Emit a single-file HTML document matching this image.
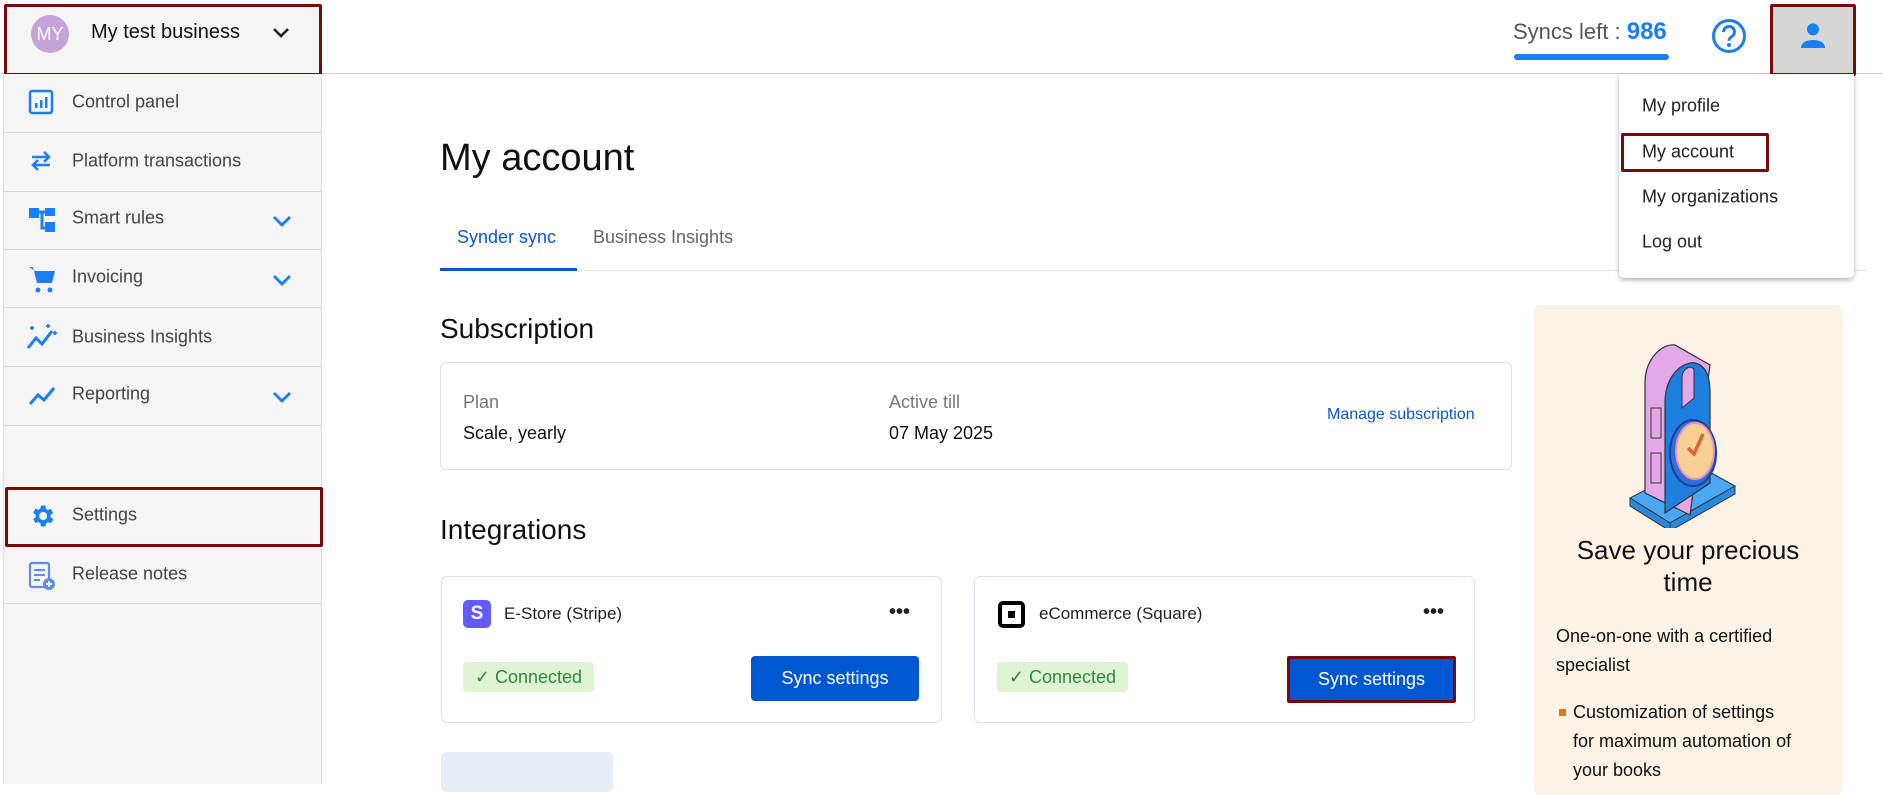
<!DOCTYPE html>
<html><head><meta charset="utf-8"><style>
*{box-sizing:border-box;margin:0;padding:0}
body{width:1883px;height:784px;overflow:hidden;background:#fff;font-family:"Liberation Sans",Arial,sans-serif;position:relative;color:#111}
.a{position:absolute}
.side{left:3px;top:74px;width:319px;height:710px;background:#f5f5f5;border-right:1px solid #ddd;border-left:1px solid #ddd}
.row{position:absolute;left:3px;width:319px;border-bottom:1px solid #d6d6d6}
.lbl{position:absolute;left:72px;font-size:18px;color:#444;transform:translateY(-50%)}
.ico{position:absolute;left:28px;transform:translateY(-50%)}
.chev{position:absolute;left:272px;transform:translateY(-50%)}
.red{position:absolute;border:3px solid #7a0a0a;border-radius:2px}
.card{position:absolute;border:1px solid #dde3ec;border-radius:6px;background:#fff}
.btn{position:absolute;background:#0057d1;color:#fff;font-size:18px;border-radius:4px;display:flex;align-items:center;justify-content:center}
.pill{position:absolute;background:#dff4d3;color:#2f8a3a;font-size:18px;border-radius:4px;display:flex;align-items:center;justify-content:center}
.mi{position:absolute;left:1642px;font-size:18px;color:#222;transform:translateY(-50%)}
</style></head><body>
<div class="a" style="left:0;top:73px;width:1883px;height:1px;background:#d0d0d0"></div>
<div class="a" style="left:5px;top:5px;width:317px;height:70px;background:#f5f5f5"></div>
<div class="a" style="left:31px;top:15px;width:38px;height:38px;border-radius:50%;background:#c5a3d9;color:#fff;font-size:18px;display:flex;align-items:center;justify-content:center">MY</div>
<div class="a" style="left:91px;top:21px;font-size:20px;color:#111">My test business</div>
<svg class="a" style="left:272px;top:27px" width="18" height="12" viewBox="0 0 18 12"><path d="M2 2l7 7 7-7" stroke="#222" stroke-width="2.6" fill="none"/></svg>
<div class="red" style="left:4px;top:4px;width:318px;height:72px"></div>

<div class="a" style="left:1513px;top:18px;font-size:22px;color:#555">Syncs left : <b style="color:#1a7ef5;font-size:24px">986</b></div>
<div class="a" style="left:1514px;top:54px;width:155px;height:6px;border-radius:3px;background:#1a7ef5"></div>
<svg class="a" style="left:1711px;top:18px" width="36" height="36" viewBox="0 0 36 36"><circle cx="18" cy="18" r="15.5" stroke="#1a7ef5" stroke-width="3" fill="none"/><path d="M12.5 14a5.5 5.5 0 1 1 8 4.8c-1.8 1-2.5 2-2.5 4" stroke="#1a7ef5" stroke-width="3" fill="none"/><circle cx="18" cy="27" r="2" fill="#1a7ef5"/></svg>
<div class="a" style="left:1772px;top:5px;width:82px;height:69px;background:#d6d6d6"></div>
<svg class="a" style="left:1797px;top:20px" width="32" height="32" viewBox="0 0 24 24"><circle cx="12" cy="7" r="4.5" fill="#1a7ef5"/><path d="M3 21c0-4 4-6 9-6s9 2 9 6z" fill="#1a7ef5"/></svg>
<div class="red" style="left:1770px;top:4px;width:86px;height:72px"></div>

<div class="a side"></div>
<div class="row" style="top:74px;height:59px"></div>
<div class="row" style="top:133px;height:59px"></div>
<div class="row" style="top:192px;height:58px"></div>
<div class="row" style="top:250px;height:58px"></div>
<div class="row" style="top:308px;height:59px"></div>
<div class="row" style="top:367px;height:59px"></div>
<div class="row" style="top:546px;height:58px"></div>

<svg class="ico" style="top:102px" width="26" height="26" viewBox="0 0 26 26"><rect x="2" y="2" width="22" height="22" rx="2" stroke="#1a7ef5" stroke-width="2.5" fill="none"/><rect x="7" y="14" width="2.5" height="5" fill="#1a7ef5"/><rect x="12" y="11" width="2.5" height="8" fill="#1a7ef5"/><rect x="17" y="8" width="2.5" height="11" fill="#1a7ef5"/></svg>
<div class="lbl" style="top:102px">Control panel</div>
<svg class="ico" style="top:161px" width="26" height="24" viewBox="0 0 26 24"><path d="M4 8h16M16 3l5 5-5 5" stroke="#1a7ef5" stroke-width="2.5" fill="none"/><path d="M22 16H6M10 11l-5 5 5 5" stroke="#1a7ef5" stroke-width="2.5" fill="none"/></svg>
<div class="lbl" style="top:161px">Platform transactions</div>
<svg class="ico" style="top:220px" width="28" height="28" viewBox="0 0 28 28"><rect x="1" y="2" width="10" height="10" fill="#1a7ef5"/><rect x="17" y="2" width="10" height="8" fill="#1a7ef5"/><rect x="17" y="16" width="10" height="10" fill="#1a7ef5"/><path d="M11 6h6M14 6v16h3" stroke="#1a7ef5" stroke-width="3" fill="none"/></svg>
<div class="lbl" style="top:218px">Smart rules</div>
<svg class="chev" style="top:221px" width="20" height="12" viewBox="0 0 20 12"><path d="M2 2l8 8 8-8" stroke="#1a7ef5" stroke-width="2.8" fill="none"/></svg>
<svg class="ico" style="top:279px" width="28" height="30" viewBox="0 0 28 30"><path d="M1 3h4l4 16h15l3-12H7" fill="#1a7ef5"/><circle cx="10" cy="26" r="2.5" fill="#1a7ef5"/><circle cx="22" cy="26" r="2.5" fill="#1a7ef5"/></svg>
<div class="lbl" style="top:277px">Invoicing</div>
<svg class="chev" style="top:280px" width="20" height="12" viewBox="0 0 20 12"><path d="M2 2l8 8 8-8" stroke="#1a7ef5" stroke-width="2.8" fill="none"/></svg>
<svg class="ico" style="top:337px;left:26px" width="32" height="28" viewBox="0 0 32 28"><path d="M2 25l8-10 6 6 10-13" stroke="#1a7ef5" stroke-width="3" fill="none"/><path d="M4 5h4M6 3v4M20 3h4M22 1v4M27 10h4M29 8v4" stroke="#1a7ef5" stroke-width="1.8"/></svg>
<div class="lbl" style="top:337px">Business Insights</div>
<svg class="ico" style="top:396px" width="28" height="22" viewBox="0 0 28 22"><path d="M2 19l8-9 6 5 10-12" stroke="#1a7ef5" stroke-width="3" fill="none"/></svg>
<div class="lbl" style="top:394px">Reporting</div>
<svg class="chev" style="top:397px" width="20" height="12" viewBox="0 0 20 12"><path d="M2 2l8 8 8-8" stroke="#1a7ef5" stroke-width="2.8" fill="none"/></svg>
<svg class="ico" style="top:516px" width="28" height="28" viewBox="0 0 24 24"><path fill="#1a7ef5" d="M19.4 13a7.5 7.5 0 0 0 0-2l2.1-1.6-2-3.5-2.5 1a7.7 7.7 0 0 0-1.700-1L15 3h-4l-.4 2.7a7.7 7.7 0 0 0-1.7 1l-2.5-1-2 3.5L6.6 11a7.5 7.5 0 0 0 0 2l-2.1 1.6 2 3.5 2.5-1a7.7 7.7 0 0 0 1.7 1L11 21h4l.4-2.7a7.7 7.7 0 0 0 1.7-1l2.5 1 2-3.5zM13 15.5a3.5 3.5 0 1 1 0-7 3.5 3.5 0 0 1 0 7z"/></svg>
<div class="lbl" style="top:515px">Settings</div>
<div class="red" style="left:5px;top:487px;width:318px;height:60px"></div>
<svg class="ico" style="top:576px" width="28" height="30" viewBox="0 0 28 30"><rect x="2" y="2" width="19" height="24" rx="2" stroke="#5b8fe0" stroke-width="2.2" fill="none"/><path d="M6 9h11M6 14h11M6 19h6" stroke="#5b8fe0" stroke-width="2"/><circle cx="21" cy="23" r="6" fill="#5b8fe0"/><path d="M21 20v6M18 23h6" stroke="#fff" stroke-width="1.8"/></svg>
<div class="lbl" style="top:574px">Release notes</div>

<div class="a" style="left:440px;top:137px;font-size:38px;color:#111">My account</div>
<div class="a" style="left:440px;top:270px;width:1426px;height:1px;background:#e1e5ec"></div>
<div class="a" style="left:440px;top:268px;width:137px;height:3px;background:#0a56d0"></div>
<div class="a" style="left:457px;top:227px;font-size:18px;color:#0a56d0">Synder sync</div>
<div class="a" style="left:593px;top:227px;font-size:18px;color:#666">Business Insights</div>
<div class="a" style="left:440px;top:313px;font-size:28px;color:#111">Subscription</div>
<div class="card" style="left:440px;top:362px;width:1072px;height:108px"></div>
<div class="a" style="left:463px;top:392px;font-size:18px;color:#777">Plan</div>
<div class="a" style="left:463px;top:423px;font-size:18px;color:#111">Scale, yearly</div>
<div class="a" style="left:889px;top:392px;font-size:18px;color:#777">Active till</div>
<div class="a" style="left:889px;top:423px;font-size:18px;color:#111">07 May 2025</div>
<div class="a" style="left:1327px;top:406px;font-size:16px;color:#0a56d0">Manage subscription</div>
<div class="a" style="left:440px;top:514px;font-size:28px;color:#111">Integrations</div>

<div class="card" style="left:441px;top:576px;width:501px;height:147px"></div>
<div class="a" style="left:463px;top:600px;width:28px;height:28px;border-radius:5px;background:#635bff;color:#fff;font-weight:bold;font-size:19px;display:flex;align-items:center;justify-content:center">S</div>
<div class="a" style="left:504px;top:604px;font-size:17px;color:#222">E-Store (Stripe)</div>
<div class="a" style="left:889px;top:601px;font-size:20px;color:#222;font-weight:bold;letter-spacing:0px">•••</div>
<div class="pill" style="left:463px;top:662px;width:131px;height:30px">✓ Connected</div>
<div class="btn" style="left:751px;top:656px;width:168px;height:45px">Sync settings</div>

<div class="card" style="left:974px;top:576px;width:501px;height:147px"></div>
<div class="a" style="left:998px;top:601px;width:27px;height:27px;border:4px solid #000;border-radius:5px;background:#fff"><div style="position:absolute;left:6px;top:6px;width:7px;height:7px;background:#000"></div></div>
<div class="a" style="left:1039px;top:604px;font-size:17px;color:#222">eCommerce (Square)</div>
<div class="a" style="left:1423px;top:601px;font-size:20px;color:#222;font-weight:bold;letter-spacing:0px">•••</div>
<div class="pill" style="left:997px;top:662px;width:131px;height:30px">✓ Connected</div>
<div class="btn" style="left:1288px;top:657px;width:167px;height:45px">Sync settings</div>
<div class="red" style="left:1287px;top:656px;width:169px;height:47px"></div>
<div class="a" style="left:441px;top:752px;width:172px;height:40px;border-radius:5px;background:#e6edf7"></div>

<div class="a" style="left:1534px;top:305px;width:308px;height:490px;border-radius:6px;background:#fcf2e6"></div>
<svg class="a" style="left:1620px;top:338px" width="130" height="190" viewBox="0 0 130 190">
<path d="M10 160l40 25 65-37-40-22z" fill="#4aa8f5" stroke="#333" stroke-width="1"/>
<path d="M10 160v8l40 25v-8z" fill="#2a88e0" stroke="#333" stroke-width="1"/>
<path d="M50 193v-8l65-37v8z" fill="#2a88e0" stroke="#333" stroke-width="1"/>
<path d="M25 155V45c0-25 18-40 30-38l35 20-20 150z" fill="#e3a8e8" stroke="#333" stroke-width="1.2"/>
<path d="M45 175V65c0-30 20-42 30-40 12 3 15 15 15 30v90z" fill="#1e7fe0" stroke="#333" stroke-width="1.2"/>
<path d="M62 70v-30c0-10 10-14 12-8v28z" fill="#e3a8e8" stroke="#333"/>
<rect x="31" y="70" width="10" height="30" fill="none" stroke="#333"/>
<rect x="31" y="115" width="10" height="30" fill="none" stroke="#333"/>
<ellipse cx="73" cy="115" rx="23" ry="33" fill="#2f6fd8" stroke="#1a3f99" stroke-width="2"/>
<ellipse cx="75" cy="113" rx="19" ry="28" fill="#f6cf94" stroke="#e892c0" stroke-width="2"/>
<path d="M68 110l6 6 9-20" stroke="#d8643c" stroke-width="3.5" fill="none"/>
</svg>
<div class="a" style="left:1534px;top:534px;width:308px;text-align:center;font-size:26px;line-height:32px;color:#111">Save your precious<br>time</div>
<div class="a" style="left:1556px;top:622px;width:270px;font-size:18px;line-height:29px;color:#111">One-on-one with a certified specialist</div>
<div class="a" style="left:1559px;top:709px;width:7px;height:7px;background:#e07a10"></div>
<div class="a" style="left:1573px;top:698px;width:250px;font-size:18px;line-height:29px;color:#111">Customization of settings<br>for maximum automation of<br>your books</div>

<div class="a" style="left:1619px;top:74px;width:235px;height:204px;background:#fff;border-radius:0 0 5px 5px;box-shadow:0 2px 5px rgba(0,0,0,.3)"></div>
<div class="mi" style="top:106px">My profile</div>
<div class="mi" style="top:152px">My account</div>
<div class="mi" style="top:197px">My organizations</div>
<div class="mi" style="top:242px">Log out</div>
<div class="red" style="left:1621px;top:133px;width:148px;height:39px"></div>
</body></html>
